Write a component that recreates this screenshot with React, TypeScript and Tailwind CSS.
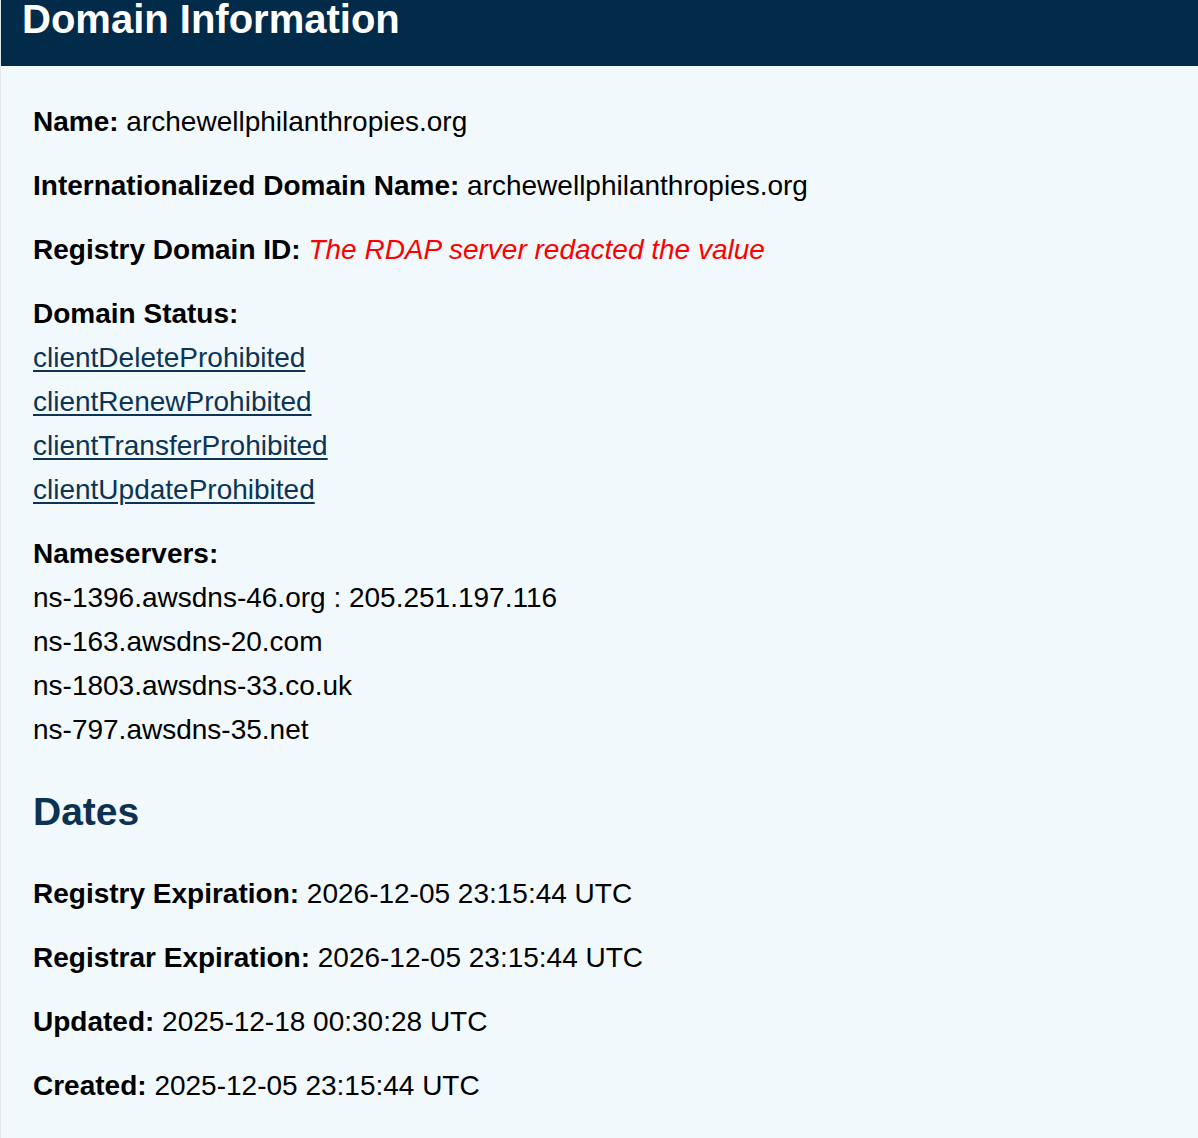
const statuses = [
  "clientDeleteProhibited",
  "clientRenewProhibited",
  "clientTransferProhibited",
  "clientUpdateProhibited",
];

const nameservers = [
  "ns-1396.awsdns-46.org : 205.251.197.116",
  "ns-163.awsdns-20.com",
  "ns-1803.awsdns-33.co.uk",
  "ns-797.awsdns-35.net",
];

const dates = [
  ["Registry Expiration:", "2026-12-05 23:15:44 UTC"],
  ["Registrar Expiration:", "2026-12-05 23:15:44 UTC"],
  ["Updated:", "2025-12-18 00:30:28 UTC"],
  ["Created:", "2025-12-05 23:15:44 UTC"],
];

export default function App() {
  return (
    <div className="min-h-[1138px] border-l border-[#e4e7ea] bg-[#f1f9fc] font-['Liberation_Sans',Arial,sans-serif] text-[28px] leading-[44px] text-black">
      {/* Header */}
      <div className="h-[66px] bg-[#022b4a] pt-[3px] pl-[21px]">
        <h1 className="text-[40px] font-bold leading-[32px] text-white">Domain Information</h1>
      </div>

      {/* Body */}
      <div className="px-[32px] pt-[34px] pb-[20px]">
        <div className="flex flex-col gap-[20px]">
          <p>
            <b>Name:</b> archewellphilanthropies.org
          </p>
          <p>
            <b>Internationalized Domain Name:</b> archewellphilanthropies.org
          </p>
          <p>
            <b>Registry Domain ID:</b> <i className="text-[#ff0000]">The RDAP server redacted the value</i>
          </p>
          <div>
            <b>Domain Status:</b>
            {statuses.map((s) => (
              <div key={s}>
                <a href="#" className="text-[#0c3456] underline decoration-[2px] underline-offset-[3px]">
                  {s}
                </a>
              </div>
            ))}
          </div>
          <div>
            <b>Nameservers:</b>
            {nameservers.map((n) => (
              <div key={n}>{n}</div>
            ))}
          </div>
        </div>

        <h2 className="mt-[36px] mb-[37px] text-[39px] font-bold leading-[47px] text-[#0c3152]">Dates</h2>

        <div className="flex flex-col gap-[20px]">
          {dates.map(([label, value]) => (
            <p key={label}>
              <b>{label}</b> {value}
            </p>
          ))}
        </div>
      </div>
    </div>
  );
}
